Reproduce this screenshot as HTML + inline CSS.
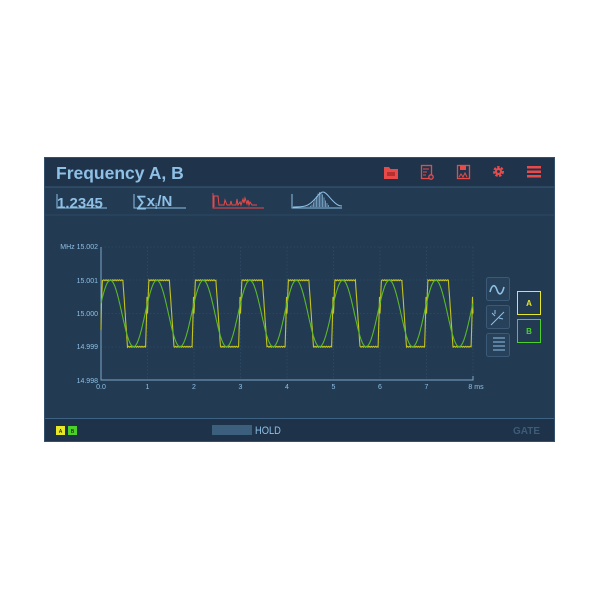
<!DOCTYPE html>
<html><head><style>
body{margin:0;width:600px;height:600px;background:#fff;position:relative;overflow:hidden;font-family:"Liberation Sans",sans-serif}
#p{position:absolute;left:44px;top:157px;width:511px;height:285px;background:#223a52}
</style></head><body>
<div id="p"></div>
<svg width="600" height="600" style="position:absolute;left:0;top:0" xmlns="http://www.w3.org/2000/svg" font-family="Liberation Sans, sans-serif">
<rect x="44" y="157" width="511" height="30" fill="#1f344b"/>
<line x1="44" y1="187" x2="555" y2="187" stroke="#3a5a78"/>
<line x1="44" y1="215" x2="555" y2="215" stroke="#2d4a66"/>
<rect x="44" y="418" width="511" height="24" fill="#1e3249"/>
<line x1="44" y1="418.5" x2="555" y2="418.5" stroke="#3d6284"/>
<rect x="44.5" y="157.5" width="510" height="284" fill="none" stroke="#33506d"/>
<text x="56" y="179" font-size="17.5" font-weight="bold" fill="#8fc0e6">Frequency A, B</text>
<g fill="#e84a4a" stroke="#e84a4a">
<path d="M384 167h5l1.5 2h7.5v10h-14z" stroke="none"/><rect x="387" y="172" width="8" height="4" fill="#b63030" stroke="none"/>
<rect x="421.5" y="165.5" width="10" height="13" fill="none" stroke-width="1.3"/><path d="M423 169h6M423 172h4M423 175h3" stroke-width="1"/><circle cx="431" cy="177" r="2.2" fill="#223a52" stroke-width="1.3"/>
<rect x="457.5" y="165.5" width="12" height="13" fill="none" stroke-width="1.3"/><rect x="460" y="166" width="6" height="4" stroke="none"/><path d="M459 177l2-3 2 3 2-4 2 4" fill="none" stroke-width="1"/>
<circle cx="498.5" cy="171.5" r="4" stroke-width="3" fill="none" stroke-dasharray="2.2 1.3"/><circle cx="498.5" cy="171.5" r="3.6" fill="#e84a4a" stroke="none"/><circle cx="498.5" cy="171.5" r="1.5" fill="#223a52" stroke="none"/>
<rect x="527" y="166" width="14" height="2.5" stroke="none"/><rect x="527" y="170.5" width="14" height="2.5" stroke="none"/><rect x="527" y="175" width="14" height="2.5" stroke="none"/>
</g>
<text x="57" y="208" font-size="15" font-weight="bold" fill="#8fc0e6">1.2345</text>
<path d="M57 194v14h50" stroke="#8fc0e6" fill="none"/>
<path d="M134 194v14h52" stroke="#8fc0e6" fill="none"/>
<text x="136" y="206" font-size="15" font-weight="bold" fill="#8fc0e6">∑x<tspan font-size="8" dy="3">i</tspan><tspan dy="-3">/N</tspan></text>
<path d="M213 193v15h51" stroke="#e84a4a" fill="none"/>
<path d="M214 207v-11h4l1 9h5l1-5 2 5h3l1-4 1 4h4l1-6 1 6 2-3 1 3 2-6 1 4 1-5 2 6 1-4 1 5 1-3 2 3h5" stroke="#e84a4a" fill="none"/>
<path d="M292 194v14h50" stroke="#8fc0e6" fill="none"/>
<path d="M293 207c12 0 15-1 20-6s7-9 10-9 6 5 10 9 6 5 9 5" stroke="#8fc0e6" fill="none"/>
<g id="hist" stroke="#8fc0e6" stroke-width="0.7"></g>
<g font-size="7" fill="#8fc0e6" text-anchor="end">
<text x="98" y="249">MHz 15.002</text><text x="98" y="283">15.001</text><text x="98" y="316">15.000</text><text x="98" y="349">14.999</text><text x="98" y="383">14.998</text>
</g>
<g id="grid" stroke="#34526f" stroke-width="0.6" stroke-dasharray="1.5 2"></g>
<path d="M101 247V380H473V376" stroke="#7fa8c8" fill="none"/>
<g id="xl" font-size="7" fill="#8fc0e6" text-anchor="middle"></g>
<polyline id="sq" fill="none" stroke="#c4c41e" stroke-width="1.1"/>
<polyline id="sn" fill="none" stroke="#5ab82a" stroke-width="1.1"/>
<g fill="none" stroke="#3a5a78"><rect x="486.5" y="277.5" width="23" height="23" rx="2" fill="#27415a"/><rect x="486.5" y="305.5" width="23" height="23" rx="2" fill="#27415a"/><rect x="486.5" y="333.5" width="23" height="23" rx="2" fill="#27415a"/></g>
<path d="M490 292c2-8 5-8 7-2s5 5 7-3" stroke="#8fc0e6" stroke-width="1.6" fill="none"/>
<path d="M491 325l13-13M492 313l3 3M495 310v4M499 318l4 1" stroke="#8fc0e6" stroke-width="1" fill="none"/>
<path d="M493 338h12M493 342h12M493 346h12M493 350h12" stroke="#8fc0e6" stroke-width="1"/>
<rect x="517.5" y="291.5" width="23" height="23" fill="none" stroke="#e8e82a"/><text x="529" y="306" font-size="8" font-weight="bold" fill="#e8e82a" text-anchor="middle">A</text>
<rect x="517.5" y="319.5" width="23" height="23" fill="none" stroke="#4cd12a"/><text x="529" y="334" font-size="8" font-weight="bold" fill="#4cd12a" text-anchor="middle">B</text>
<rect x="56" y="426" width="9" height="9" fill="#e8e82a"/><rect x="68" y="426" width="9" height="9" fill="#4cd12a"/>
<text x="60.5" y="433" font-size="5" text-anchor="middle">A</text><text x="72.5" y="433" font-size="5" text-anchor="middle">B</text>
<rect x="212" y="425" width="40" height="10" fill="#3c5f7e"/>
<text x="255" y="434" font-size="11" fill="#8fc0e6" transform="translate(255 434) scale(0.85 1) translate(-255 -434)">HOLD</text>
<text x="540" y="434" font-size="10" font-weight="bold" fill="#3d5c78" text-anchor="end">GATE</text>
</svg>
<script>
var X=t=>101+t*46.5,Y=v=>313.5-v*33.25,s="",q="",g="",xl="",h="";
for(var i=0;i<=800;i++){var t=i/100,p=t%1,v;
if(p<0.03)v=p/0.03;else if(p<0.47)v=1+0.015*Math.sin(i*1.3);else if(p<0.57)v=1-2*(p-0.47)/0.1;else if(p<0.96)v=-1+0.015*Math.sin(i*1.3);else v=-1+2*(p-0.96)/0.04;
if(i==0)v=-0.5;
q+=X(t).toFixed(1)+","+Y(v).toFixed(1)+" ";
s+=X(t).toFixed(1)+","+Y(Math.sin(2*Math.PI*(t+0.05))).toFixed(1)+" ";}
document.getElementById("sq").setAttribute("points",q);
document.getElementById("sn").setAttribute("points",s);
for(var k=1;k<=8;k++)g+='<line x1="'+X(k)+'" y1="247" x2="'+X(k)+'" y2="380"/>';
[247,280,313.5,347].forEach(y=>g+='<line x1="101" y1="'+y+'" x2="473" y2="'+y+'"/>');
document.getElementById("grid").innerHTML=g;
for(var k=0;k<8;k++)xl+='<text x="'+X(k)+'" y="389">'+(k?k:"0.0")+'</text>';
xl+='<text x="476" y="389">8 ms</text>';document.getElementById("xl").innerHTML=xl;
for(var x=306;x<330;x+=1.5){var y=207-15*Math.exp(-Math.pow((x-320)/6,2));h+='<line x1="'+x+'" y1="207" x2="'+x+'" y2="'+y+'"/>'}
document.getElementById("hist").innerHTML=h;
</script>
</body></html>
